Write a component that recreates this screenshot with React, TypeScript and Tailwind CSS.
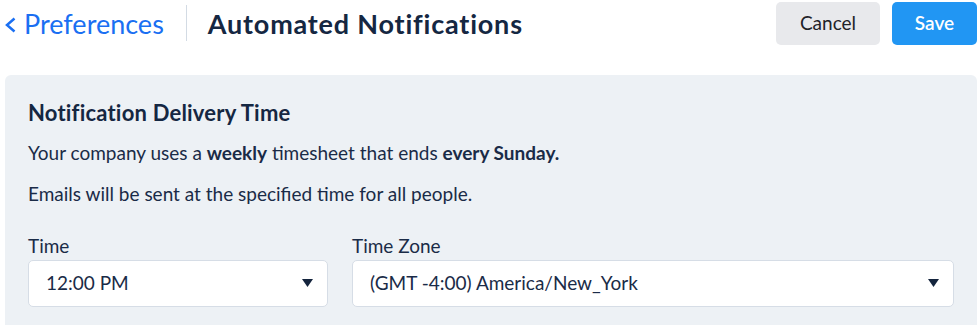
import React from "react";

function Caret() {
  return (
    <svg width="11" height="8" viewBox="0 0 11 8" className="shrink-0">
      <path d="M0 0 H11 L5.5 8 Z" fill="#14243d" />
    </svg>
  );
}

export default function App() {
  return (
    <div className="w-[978px] h-[325px] overflow-hidden bg-white pl-[5px] pr-[1px] text-[#1a2b47]" style={{ fontFamily: "Lato, 'Noto Sans', sans-serif" }}>
      <div className="flex items-center justify-between h-[45px] pt-[1px]">
        <div className="flex items-center">
          <div className="flex items-center text-[#1a6ff2] text-[27px] leading-none">
            <svg width="11" height="16" viewBox="0 0 11 16" className="shrink-0 mr-[8px] mt-[3px]">
              <path d="M9.5 1.5 L2 8 L9.5 14.5" fill="none" stroke="#1a6ff2" strokeWidth="2.5" strokeLinejoin="miter" />
            </svg>
            <span>Preferences</span>
          </div>
          <div className="w-px h-[36px] bg-[#d3dbe4] ml-[22px] mr-[21px]" />
          <div className="text-[27px] font-bold leading-none tracking-[0.8px] text-[#152742]">Automated Notifications</div>
        </div>
        <div className="flex items-center gap-[12px]">
          <button className="w-[104px] h-[43px] rounded-[5px] bg-[#e8e9ec] text-[19px] text-[#1f2228]">Cancel</button>
          <button className="w-[85px] h-[43px] rounded-[5px] bg-[#2196f3] text-[19px] font-semibold text-white">Save</button>
        </div>
      </div>
      <div className="mt-[30px] rounded-[6px] bg-[#edf1f5] pl-[23px] pr-[23px] pt-[25px] pb-[30px]">
        <div className="text-[22px] font-bold leading-[1.2] tracking-[0.2px] text-[#152742]">Notification Delivery Time</div>
        <div className="mt-[16px] text-[19px] leading-[1.2]">
          Your company uses a <b>weekly</b> timesheet that ends <b>every Sunday.</b>
        </div>
        <div className="mt-[18px] text-[19px] leading-[1.2]">Emails will be sent at the specified time for all people.</div>
        <div className="mt-[29px] flex gap-[24px]">
          <div className="w-[300px]">
            <div className="text-[19px] leading-[1.2]">Time</div>
            <div className="mt-[2px] h-[47px] rounded-[5px] border border-[#d6dde6] bg-white flex items-center justify-between pl-[17px] pr-[14px] text-[19px]">
              <span>12:00 PM</span>
              <Caret />
            </div>
          </div>
          <div className="flex-1">
            <div className="text-[19px] leading-[1.2]">Time Zone</div>
            <div className="mt-[2px] h-[47px] rounded-[5px] border border-[#d6dde6] bg-white flex items-center justify-between pl-[17px] pr-[14px] text-[19px]">
              <span>(GMT -4:00) America/New_York</span>
              <Caret />
            </div>
          </div>
        </div>
      </div>
    </div>
  );
}
